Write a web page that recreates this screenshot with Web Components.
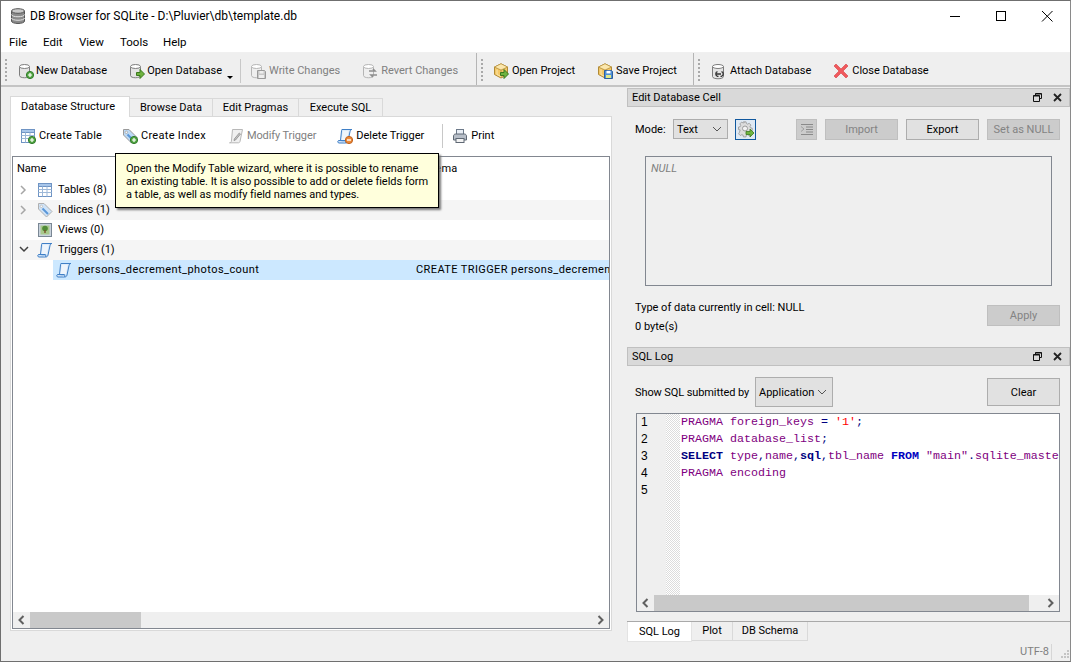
<!DOCTYPE html>
<html><head><meta charset="utf-8">
<style>
html,body{margin:0;padding:0;background:#efefef}
body{font:11px/16px Roboto,"Noto Sans",sans-serif;color:#000;width:1071px;height:662px;overflow:hidden}
</style></head><body>
<app-window>
  <title-bar text="DB Browser for SQLite - D:\Pluvier\db\template.db"></title-bar>
  <menu-bar></menu-bar>
  <main-toolbar></main-toolbar>
  <main-area>
    <structure-pane slot="left"></structure-pane>
    <edit-cell-dock slot="right"></edit-cell-dock>
    <sql-log-dock slot="right"></sql-log-dock>
  </main-area>
</app-window>
<script>
const cyl=(f='#e4e4e4',s='#7d7d7d',x=1,w=11,y=1.5,h=12)=>`<path d="M${x+.5} ${y+2}v${h-3}c0 3 ${w-1} 3 ${w-1} 0v-${h-3}" fill="${f}" stroke="${s}"/><ellipse cx="${x+w/2}" cy="${y+2}" rx="${w/2-.5}" ry="2" fill="#fff" stroke="${s}"/>`;
const arrow=`<path d="M7.5 9.5h3.500v-3l4.500 4.500-4.500 4.500v-3H7.500z" fill="#6fb33f" stroke="#3b7a1e"/>`;
const plus=`<circle cx="12" cy="12" r="3.600" fill="#55a845" stroke="#2f7a2a"/><path d="M10 12h4M12 10v4" stroke="#fff" stroke-width="1.200"/>`;
const box=`<path d="M8 .8 14.500 4v7.500L8 15 1.500 11.500V4z" fill="#f3c766" stroke="#b08a35"/><path d="M1.800 4 8 7l6.200-3M8 7v7.800" fill="none" stroke="#c9a04a"/><path d="M8 .8 14.500 4 8 7 1.500 4z" fill="#fbe7ad" stroke="#b08a35" stroke-width=".6"/><path d="M4 6.500v5l4 2" fill="none" stroke="#fbe7ad"/>`;
const floppy=(c,l)=>`<path d="M7.500 7.500h7l1 1v7h-8z" fill="${c}" stroke="${l}"/><rect x="9.500" y="7.800" width="4" height="2.600" fill="#fff"/><rect x="9" y="12" width="5" height="3" fill="#dfe98a"/>`;
const scroll=(a='#d3e5f8',b='#3f7fc6')=>`<path d="M5 1.500h10c-1.100 0-1.700.8-2 2.200L11 13c-.3 1.500-1.200 2-2.500 2H2c-1.400 0-1.700-2-.4-2.500H3.500L4.500 3c.1-.9.200-1.500.5-1.500z" fill="${a}" stroke="${b}"/><path d="M5.800 2.500h6L10 12H4.500z" fill="#eef5fc"/><path d="M1.800 12.500h6.500c.5 0 .6 1.600 .2 2.500" fill="#a9caee" stroke="${b}"/>`;
const tag=(c='#bcd9f5',s='#9a9a9a')=>`<path d="M1.500 1.500h5.500l8 8-5.500 5.500-8-8z" fill="${c}" stroke="${s}"/><circle cx="4.300" cy="4.300" r="1.200" fill="#fff" stroke="${s}" stroke-width=".7"/><path d="M5.500 6.500l5.500 5.500" stroke="#5a97d8" stroke-width="2"/>`;
const table=`<rect x="1.500" y="1.500" width="13" height="13" fill="#fff" stroke="#6f94c4"/><rect x="1.500" y="1.500" width="13" height="3" fill="#a8c6ea" stroke="#6f94c4"/><path d="M1.500 7.500h13M1.500 10.500h13M5.500 4.500v10M10 4.500v10" stroke="#9db8d8" fill="none"/>`;
const gear=`<path d="M6.500 1h3l.4 2 1.500.7 1.800-1 2 2.100-1.100 1.700.6 1.500 2 .4v3l-2 .4-.6 1.500 1 1.800-2 2-1.800-1-1.500.6-.4 2h-3l-.4-2-1.500-.6-1.800 1-2-2 1-1.800L2.600 10.500l-2-.4v-3l2-.4.6-1.500-1-1.800 2-2.100 1.800 1 1.500-.6z" transform="scale(.85)" fill="#dcdcdc" stroke="#9a9a9a"/><circle cx="7" cy="7.500" r="2.500" fill="#f3f3f3" stroke="#9a9a9a"/>`;
const ICONS={
 app:`<path d="M1.500 3v10c0 3.300 13 3.300 13 0V3" fill="#8a8a8a" stroke="#555"/><ellipse cx="8" cy="3" rx="6.500" ry="2.300" fill="#c9c9c9" stroke="#555"/><path d="M1.500 6.500c0 3 13 3 13 0M1.500 10c0 3 13 3 13 0" fill="none" stroke="#e3e3e3"/>`,
 newdb:cyl()+plus, opendb:cyl()+arrow,
 write:cyl('#efefef','#b5b5b5')+`<path d="M7.500 7.500h7l1 1v7h-8z" fill="#c8c8c8" stroke="#9a9a9a"/><rect x="9.500" y="8" width="4" height="2.500" fill="#eee"/><rect x="9" y="12" width="5" height="3" fill="#eee"/>`,
 revert:cyl('#efefef','#b5b5b5')+`<path d="M7 8h6l-2-2M15 12H9l2 2" fill="none" stroke="#8e8e8e" stroke-width="1.600"/>`,
 openproj:box+arrow, saveproj:box+floppy('#4f8fd6','#2d5f9e'),
 attach:cyl('#e4e4e4','#7d7d7d',1,12,1.500,13)+`<path d="M5 11h5M6.500 8.700a2.400 2.400 0 0 0 0 4.600h1M10.500 8.700a2.400 2.400 0 0 1 0 4.600h-1" fill="none" stroke="#333" stroke-width="1.300"/>`,
 close:`<path d="M3 1 8 6l5-5 2 2-5 5 5 5-2 2-5-5-5 5-2-2 5-5-5-5z" fill="#f0595d" stroke="#d63e42" stroke-width=".6"/>`,
 ctable:table+plus, cindex:tag()+plus,
 modtrig:`<path d="M4.500 1.500h10L12 13.500c-.2 1-1 1.300-1.800 1.300H1.500c1 0 1.700-.6 1.900-1.500z" fill="#f0f0f0" stroke="#b8b8b8"/><path d="M12.500 6 7.500 12l-1.500.6.300-1.600 5-6z" fill="#c5c5c5" stroke="#8c8c8c" stroke-width=".8"/>`,
 deltrig:scroll()+`<circle cx="12" cy="12" r="3.600" fill="#ec8b3a" stroke="#c0601d"/><path d="M10 12h4" stroke="#fff" stroke-width="1.400"/>`,
 print:`<rect x="4.500" y="1.500" width="7" height="5" fill="#e9eef5" stroke="#6d7a8a"/><path d="M1.500 12V8c0-1 .8-2 2-2h9c1.200 0 2 1 2 2v4z" fill="#b7bec8" stroke="#5f6874"/><rect x="4" y="10.500" width="8" height="4" fill="#f3f3f3" stroke="#5f6874"/>`,
 tables:table, tag:tag('#cfe3f7','#b0b0b0'),
 views:`<rect x="1.500" y="1.500" width="13" height="13" fill="#c9d3dd" stroke="#7a8794"/><rect x="3.500" y="3.500" width="9" height="9" fill="#a8c98b"/><circle cx="8" cy="6.500" r="2.800" fill="#4f8b37"/><rect x="7.300" y="8" width="1.400" height="3" fill="#77522a"/>`,
 scroll:scroll(),
 gear:gear+`<path d="M8 10.500h4V8l4 4-4 4v-2.500H8z" fill="#6fb33f" stroke="#3b7a1e" stroke-width=".8"/>`,
 indent:`<path d="M2 3.500h12M7 6h7M7 8.500h7M7 11h7M2 13.500h12" stroke="#8a8a8a" fill="none"/><path d="M2 5.500 5 8 2 10.500" stroke="#a0a0a0" fill="none"/>`
};
function def(name,html){
  customElements.define(name,class extends HTMLElement{
    constructor(){super();this.attachShadow({mode:'open'})}
    connectedCallback(){this.shadowRoot.innerHTML=typeof html==='function'?html(this):html;}
  });
}
def('app-icon',e=>{const s=e.getAttribute('size')||16;return `<style>:host{display:inline-flex;flex:none;width:${s}px;height:${s}px}svg{display:block}</style><svg xmlns="http://www.w3.org/2000/svg" width="${s}" height="${s}" viewBox="0 0 16 16" overflow="visible">${ICONS[e.getAttribute('name')]}</svg>`});
def('app-window',`<style>:host{display:flex;flex-direction:column;box-sizing:border-box;width:1071px;height:662px;border:1px solid #6f6f6f;border-right-color:#8a8a8a;background:#efefef}</style><slot></slot>`);
def('title-bar',e=>`<style>:host{display:flex;align-items:center;height:30px;background:#fff;padding:0 0 1px 9px;box-sizing:border-box;flex:none}
 span{margin-left:4px;flex:1;font-size:12px}.c{display:flex;margin-top:1px}.c svg{display:block;width:46px;height:29px}</style>
 <app-icon name="app"></app-icon><span>${e.getAttribute('text')}</span>
 <div class="c"><svg viewBox="0 0 46 29"><path d="M18 14.500h10" stroke="#000"/></svg><svg viewBox="0 0 46 29"><rect x="18.500" y="9.500" width="9" height="9" fill="none" stroke="#000"/></svg><svg viewBox="0 0 46 29"><path d="M18 9l10.500 10.500M28.500 9 18 19.500" stroke="#000" fill="none" stroke-width="1"/></svg></div>`);
def('menu-bar',`<style>:host{display:flex;align-items:center;height:22px;background:#fff;flex:none;border-bottom:1px solid #f0f0f0;box-sizing:border-box;font-size:11.500px}span{flex:none}</style>
 <span style="margin-left:8px;width:34px">File</span><span style="width:36px">Edit</span><span style="width:41px">View</span><span style="width:43px">Tools</span><span>Help</span>`);
def('tool-btn',e=>{const d=e.hasAttribute('disabled');const g=e.getAttribute('gap')||3;return `<style>:host{display:inline-flex;align-items:center;flex:none;gap:${g}px;color:${d?'#808080':'#000'};white-space:nowrap}</style><app-icon name="${e.getAttribute('icon')}"></app-icon><span><slot></slot></span>`});
def('tool-grip',`<style>:host{display:block;flex:none;width:2px;height:23px;background:radial-gradient(circle at 1px 1px,#a9a9a9 .9px,transparent 1px) 0 0/2px 4px repeat-y}</style>`);
def('tool-sep',`<style>:host{display:block;flex:none;width:1px;height:24px;background:#c8c8c8}</style>`);
def('main-toolbar',`<style>:host{display:flex;flex:none;height:32px;background:#efefef;border-bottom:2px solid #c4c4c4}
 .g{display:flex;align-items:center;height:32px;box-sizing:border-box;flex:none;padding-top:3px}.b{border-right:1px solid #b5b5b5}
 .arrow{width:0;height:0;border:3px solid transparent;border-top:3px solid #000;border-bottom:0;align-self:flex-end;margin:0 0 6px 5px}</style>
 <div class="g b" style="width:476px;padding-left:4px"><tool-grip></tool-grip>
  <tool-btn icon="newdb" gap="2" style="margin-left:11px">New Database</tool-btn>
  <tool-btn icon="opendb" gap="2" style="margin-left:22px">Open Database</tool-btn><span class="arrow"></span>
  <tool-sep style="margin:0 9px 0 7px"></tool-sep>
  <tool-btn icon="write" disabled>Write Changes</tool-btn>
  <tool-btn icon="revert" disabled style="margin-left:22px">Revert Changes</tool-btn></div>
 <div class="g b" style="width:217px;padding-left:4px"><tool-grip></tool-grip>
  <tool-btn icon="openproj" style="margin-left:10px">Open Project</tool-btn>
  <tool-btn icon="saveproj" style="margin-left:22px">Save Project</tool-btn></div>
 <div class="g" style="padding-left:4px"><tool-grip></tool-grip>
  <tool-btn icon="attach" style="margin-left:11px">Attach Database</tool-btn>
  <tool-btn icon="close" style="margin-left:22px;letter-spacing:-.03px">Close Database</tool-btn></div>`);
def('main-area',`<style>:host{display:grid;grid-template-columns:618px 443px;flex:1;min-height:0;background:#efefef}
 .l{padding:9px 0 0 9px;min-width:0}.r{display:flex;flex-direction:column;padding:1px 0 0 8px;min-width:0;box-sizing:border-box;width:451px}</style>
 <div class="l"><slot name="left"></slot></div><div class="r"><slot name="right"></slot></div>`);
def('tab-strip',e=>{const tabs=e.getAttribute('tabs').split('|');const w=e.getAttribute('widths').split(',');
 return `<style>:host{display:flex;align-items:flex-end;height:21px;position:relative;z-index:1;margin-bottom:-1px}
 div{box-sizing:border-box;height:19px;background:#efefef;border:1px solid #d9d9d9;border-left:0;text-align:center;line-height:18px;white-space:nowrap}
 .a{height:21px;background:#fff;border-left:1px solid #d9d9d9;border-bottom:0;line-height:20px;text-align:left;padding-left:10px}</style>
 ${tabs.map((t,i)=>`<div class="${i==0?'a':''}" style="width:${w[i]}px">${t}</div>`).join('')}`});
def('h-scroll',e=>`<style>:host{display:flex;align-items:center;height:16px;background:#efefef;flex:none}
 .a{width:17px;flex:none;display:flex;justify-content:center}.t{flex:1;height:16px;position:relative}
 i{position:absolute;top:0;bottom:0;background:#c9c9c9;left:${e.getAttribute('l')}px;right:${e.getAttribute('r')}px}</style>
 <div class="a"><svg width="7" height="10"><path d="M5.500 1 1.500 5l4 4" fill="none" stroke="#606060" stroke-width="2"/></svg></div><div class="t"><i></i></div><div class="a"><svg width="7" height="10"><path d="M1.500 1l4 4-4 4" fill="none" stroke="#606060" stroke-width="2"/></svg></div>`);
def('tree-row',e=>{const ind=+e.getAttribute('indent')||0,ex=e.getAttribute('exp');const alt=e.hasAttribute('alt'),sel=e.hasAttribute('sel');
 const ar=ex==='c'?`<path d="M2 1l4 4-4 4" fill="none" stroke="#a6a6a6" stroke-width="1.500"/>`:ex==='o'?`<path d="M1 2l4 4 4-4" fill="none" stroke="#404040" stroke-width="1.500"/>`:'';
 return `<style>:host{display:flex;height:20px;align-items:center;background:${alt?'#f5f5f5':'#fff'};white-space:nowrap;overflow:hidden;flex:none}
 .g{display:flex;align-items:center;height:20px;flex:1;min-width:0;overflow:hidden;${sel?'background:#cce8ff;':''}margin-left:${ind?40:0}px}
 .x{width:10px;margin-left:6px;margin-right:8px;display:flex}.n{flex:none}.s{white-space:nowrap;flex:none;width:193px;overflow:hidden;letter-spacing:.4px}</style>
 <div class="g">${ind?'':`<span class="x"><svg width="10" height="10">${ar}</svg></span>`}<app-icon name="${e.getAttribute('icon')}" style="margin-left:${ind?3:0}px"></app-icon><span class="n" style="margin-left:5px;${ind?'width:338px;margin-left:6px;letter-spacing:.43px':''}"><slot></slot></span>${ind?`<span class="s">${e.getAttribute('schema')}</span>`:''}</div>`});
def('hover-tip',`<style>:host{position:absolute;left:105px;top:57px;width:324px;height:55px;box-sizing:border-box;background:#ffffdc;border:1px solid #000;box-shadow:2px 2px 2px #777;padding:8px 10px 0 10px;line-height:13px;letter-spacing:-.05px;white-space:nowrap;z-index:5}</style><slot></slot>`);
def('structure-pane',`<style>:host{display:block;width:602px;position:relative}
 .p{box-sizing:border-box;height:515px;background:#fff;border:1px solid #d9d9d9;padding:0 1px;display:flex;flex-direction:column}
 .t{display:flex;align-items:center;height:39px;flex:none;padding-left:8px;padding-bottom:1px;box-sizing:border-box}
 .v{flex:1;border:1px solid #828790;display:flex;flex-direction:column;min-height:0;margin-bottom:1px}
 .h{height:23px;flex:none;display:flex;align-items:center;padding-left:4px}
 .b{flex:1}</style>
 <tab-strip tabs="Database Structure|Browse Data|Edit Pragmas|Execute SQL" widths="120,83,86,84"></tab-strip>
 <div class="p"><div class="t">
   <tool-btn icon="ctable" style="letter-spacing:.15px">Create Table</tool-btn>
   <tool-btn icon="cindex" style="margin-left:20px;letter-spacing:.3px">Create Index</tool-btn>
   <tool-btn icon="modtrig" disabled style="margin-left:22px;letter-spacing:-.1px">Modify Trigger</tool-btn>
   <tool-btn icon="deltrig" style="margin-left:21px">Delete Trigger</tool-btn>
   <tool-sep style="margin:0 9px 0 18px"></tool-sep>
   <tool-btn icon="print">Print</tool-btn></div>
  <div class="v"><div class="h"><span style="width:399px;flex:none">Name</span><span style="letter-spacing:.3px">Schema</span></div>
   <tree-row icon="tables" exp="c">Tables (8)</tree-row>
   <tree-row icon="tag" exp="c" alt>Indices (1)</tree-row>
   <tree-row icon="views" exp="">Views (0)</tree-row>
   <tree-row icon="scroll" exp="o" alt>Triggers (1)</tree-row>
   <tree-row icon="scroll" indent="1" sel schema="CREATE TRIGGER persons_decrement_photos_count">persons_decrement_photos_count</tree-row>
   <div class="b"></div><h-scroll l="0" r="451"></h-scroll></div></div>
 <hover-tip>Open the Modify Table wizard, where it is possible to rename<br>an existing table. It is also possible to add or delete fields form<br>a table, as well as modify field names and types.</hover-tip>`);
def('dock-title',e=>`<style>:host{display:flex;align-items:center;box-sizing:border-box;height:19px;background:#d9d9d9;border:1px solid #c0c0c0;padding-left:4px;flex:none}
 span{flex:1;padding-top:1px}svg{display:block}</style><span>${e.getAttribute('text')}</span>
 <svg width="9" height="9" style="margin-right:11px"><path d="M2.500 2.500V.5h6v5h-2M.5 2.500h6v6h-6z" fill="none" stroke="#111"/><path d="M.5 3h6M2.500 1h6" stroke="#111"/></svg>
 <svg width="9" height="9" style="margin-right:7px"><path d="M1 1l7 7M8 1 1 8" stroke="#222" stroke-width="1.800"/></svg>`);
def('push-btn',e=>{const d=e.hasAttribute('disabled');return `<style>:host{display:flex;align-items:center;justify-content:center;box-sizing:border-box;width:${e.getAttribute('w')||73}px;height:${e.getAttribute('h')||21}px;flex:none;padding-top:1px;background:${d?'#ccc':'#e1e1e1'};border:1px solid ${d?'#bfbfbf':'#adadad'};color:${d?'#838383':'#000'}}</style><slot></slot>`});
def('combo-box',e=>`<style>:host{display:flex;align-items:center;box-sizing:border-box;width:${e.getAttribute('w')}px;height:${e.getAttribute('h')}px;flex:none;background:#e1e1e1;border:1px solid #adadad;padding-left:3px}
 span{flex:1;padding-top:1px}svg{margin-right:${e.getAttribute('m')||5}px}</style><span><slot></slot></span><svg width="10" height="6"><path d="M1 1l4 4 4-4" fill="none" stroke="#555"/></svg>`);
def('edit-cell-dock',`<style>:host{display:flex;flex-direction:column;height:259px;flex:none;box-sizing:border-box}
 .m{display:flex;align-items:center;height:20px;margin:12px 0 0 8px;flex:none}
 .i{display:flex;align-items:center;justify-content:center;box-sizing:border-box;width:21px;height:21px;flex:none}
 .e{box-sizing:border-box;height:130px;margin:17px 18px 0 18px;border:1px solid #828790;padding:4px 5px;color:#808080;font-style:italic;flex:none}
 .f{display:flex;margin:12px 10px 0 8px;justify-content:space-between}.l{line-height:19px}</style>
 <dock-title text="Edit Database Cell"></dock-title>
 <div class="m"><span style="width:38px;flex:none;padding-top:2px">Mode:</span><combo-box w="55" h="20">Text</combo-box>
  <div class="i" style="margin-left:7px;background:#dfe9f3;border:1px solid #10589e"><app-icon name="gear"></app-icon></div>
  <div class="i" style="margin-left:40px;background:#ccc;border:1px solid #bfbfbf"><app-icon name="indent"></app-icon></div>
  <push-btn disabled style="margin-left:8px">Import</push-btn><push-btn style="margin-left:8px">Export</push-btn><push-btn disabled style="margin-left:8px">Set as NULL</push-btn></div>
 <div class="e">NULL</div>
 <div class="f"><div class="l">Type of data currently in cell: NULL<br>0 byte(s)</div><push-btn disabled style="margin-top:7px">Apply</push-btn></div>`);
def('sql-editor',`<style>:host{display:flex;flex-direction:column;box-sizing:border-box;height:199px;border:1px solid #828790;background:#fff;flex:none;overflow:hidden}
 .b{flex:1;display:flex;min-height:0}.n{width:29px;background:#efefef;flex:none;padding:0 0 0 4px;box-sizing:border-box}
 .n div,.c div{height:17px;line-height:17px}.n div{font:12px/17px "Liberation Sans",sans-serif}
 .fo{width:14px;flex:none;background:conic-gradient(#fff 25%,#dcdcdc 0 50%,#fff 0 75%,#dcdcdc 0) 0 0/2px 2px}
 .c{flex:1;padding-left:1px;font:11.67px/17px "Liberation Mono",monospace;white-space:pre;overflow:hidden;color:#000080;min-width:0}
 .s{color:#800080}.k{font-weight:700;color:#000080}.r{color:#ff0000}.q{color:#800080}</style>
 <div class="b"><div class="n"><div>1</div><div>2</div><div>3</div><div>4</div><div>5</div></div><div class="fo"></div>
 <div class="c"><div><span class="s">PRAGMA foreign_keys</span> = <span class="r">'1'</span>;</div><div><span class="s">PRAGMA database_list</span>;</div><div><span class="k">SELECT</span> <span class="s">type</span>,<span class="s">name</span>,<span class="k">sql</span>,<span class="s">tbl_name</span> <span class="k" style="color:#0000c0">FROM</span> <span class="q">"main"</span>.<span class="s">sqlite_master</span>;</div><div><span class="s">PRAGMA encoding</span></div><div></div></div></div>
 <h-scroll l="0" r="13"></h-scroll>`);
def('bottom-tabs',`<style>:host{display:flex;height:21px;flex:none;border-top:1px solid #a9a9a9;box-sizing:border-box}
 div{box-sizing:border-box;height:19px;line-height:18px;text-align:center;border-right:1px solid #d9d9d9;border-bottom:1px solid #d9d9d9}
 .a{background:#fff;height:20px;line-height:20px;border:1px solid #e3e3e3;border-top:0}</style>
 <div class="a" style="width:65px">SQL Log</div><div style="width:41px">Plot</div><div style="width:75px">DB Schema</div>`);
def('status-bar',`<style>:host{display:flex;align-items:center;justify-content:flex-end;height:20px;color:#808080;flex:none}
 i{display:block;width:1px;height:16px;background:#d6d6d6;margin:0 8px 0 2px}
 svg{display:block;margin:3px 1px 0 0}</style><slot></slot><i></i><svg width="9" height="9"><path d="M7 1h2v2H7zM4 4h2v2H4zM7 4h2v2H7zM1 7h2v2H1zM4 7h2v2H4zM7 7h2v2H7z" fill="#c4c4c4"/></svg>`);
def('sql-log-dock',`<style>:host{display:flex;flex-direction:column;flex:1;min-height:0}
 .r{display:flex;align-items:center;height:30px;margin:11px 10px 0 8px;flex:none}
 sql-editor{margin:6px 10px 0 9px}bottom-tabs{margin-top:9px}</style>
 <dock-title text="SQL Log"></dock-title>
 <div class="r"><span style="flex:none;width:120px;padding-top:2px;letter-spacing:-.1px">Show SQL submitted by</span><combo-box w="78" h="30" m="5">Application</combo-box><push-btn w="73" h="28" style="margin-left:auto">Clear</push-btn></div>
 <sql-editor></sql-editor><bottom-tabs></bottom-tabs><status-bar>UTF-8</status-bar>`);
</script>
</body></html>
